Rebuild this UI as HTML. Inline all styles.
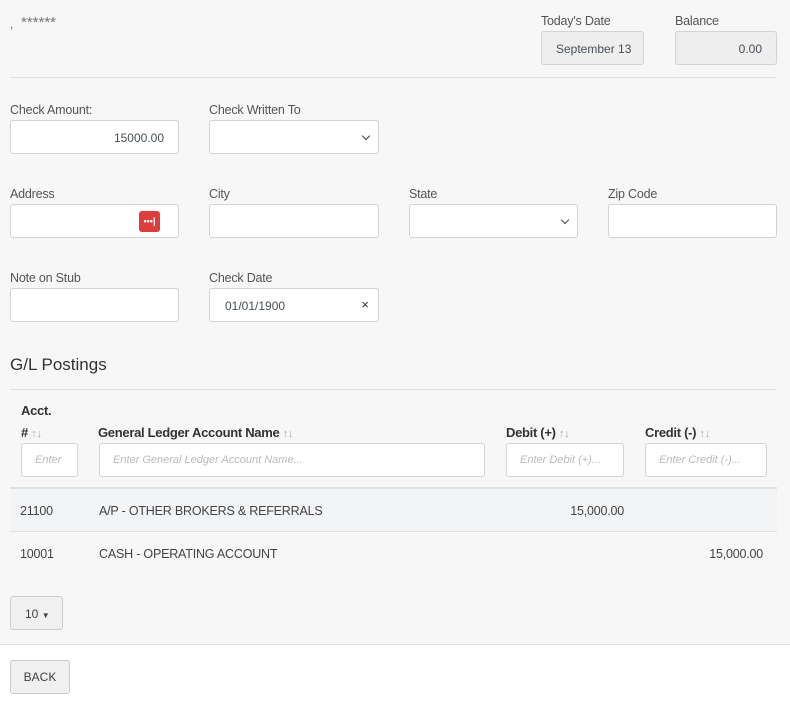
<!DOCTYPE html>
<html><head><style>
*{box-sizing:border-box;margin:0;padding:0}
body{width:790px;height:702px;background:#f7f7f7;font-family:"Liberation Sans",sans-serif;color:#495057;position:relative;overflow:hidden;font-size:12px}
.a{position:absolute}
.lbl{position:absolute;font-size:12.5px;color:#555;letter-spacing:-0.2px}
.in{position:absolute;background:#fff;border:1px solid #ced4da;border-radius:3px;height:34px}
.ro{background:#eeeeee}
.hr{position:absolute;height:1px;background:#dee2e6}
.chev{position:absolute;right:9px;top:12px;width:6px;height:6px;border-right:1.5px solid #444;border-bottom:1.5px solid #444;transform:rotate(45deg)}
.th{position:absolute;font-size:13px;font-weight:bold;color:#333;letter-spacing:-0.3px}
.s{color:#aaa;font-weight:normal;font-size:11px}
.ph{position:absolute;font-size:11px;font-style:italic;color:#bbb;top:10px;left:13px;white-space:nowrap}
.td{position:absolute;font-size:12.5px;color:#444;letter-spacing:-0.2px}
</style></head><body>
<div class="a" style="left:10px;top:17px;font-size:12px;color:#666">,</div>
<div class="a" style="left:21px;top:14px;font-size:15px;color:#777;letter-spacing:0px">******</div>
<div class="lbl" style="left:541px;top:14px">Today's Date</div>
<div class="lbl" style="left:675px;top:14px">Balance</div>
<div class="in ro" style="left:541px;top:31px;width:103px"><span class="a" style="left:14px;top:10px;font-size:12px">September 13</span></div>
<div class="in ro" style="left:675px;top:31px;width:102px"><span class="a" style="right:14px;top:10px;font-size:12px">0.00</span></div>
<div class="hr" style="left:10px;top:77px;width:767px"></div>

<div class="lbl" style="left:10px;top:103px">Check Amount:</div>
<div class="lbl" style="left:209px;top:103px">Check Written To</div>
<div class="in" style="left:10px;top:120px;width:169px"><span class="a" style="right:14px;top:10px;font-size:12px">15000.00</span></div>
<div class="in" style="left:209px;top:120px;width:170px"><div class="chev"></div></div>

<div class="lbl" style="left:10px;top:187px">Address</div>
<div class="lbl" style="left:209px;top:187px">City</div>
<div class="lbl" style="left:409px;top:187px">State</div>
<div class="lbl" style="left:608px;top:187px">Zip Code</div>
<div class="in" style="left:10px;top:204px;width:169px"><div class="a" style="left:128px;top:6px;width:21px;height:21px;background:#dc3e3e;border-radius:3px;color:#fff;font-size:9px;line-height:20px;text-align:center;font-weight:bold">•••|</div></div>
<div class="in" style="left:209px;top:204px;width:170px"></div>
<div class="in" style="left:409px;top:204px;width:169px"><div class="chev"></div></div>
<div class="in" style="left:608px;top:204px;width:169px"></div>

<div class="lbl" style="left:10px;top:271px">Note on Stub</div>
<div class="lbl" style="left:209px;top:271px">Check Date</div>
<div class="in" style="left:10px;top:288px;width:169px"></div>
<div class="in" style="left:209px;top:288px;width:170px"><span class="a" style="left:15px;top:10px;font-size:12px">01/01/1900</span><span class="a" style="right:9px;top:8px;font-size:13px;color:#333">×</span></div>

<div class="a" style="left:10px;top:355px;font-size:17px;color:#333">G/L Postings</div>
<div class="hr" style="left:10px;top:389px;width:767px"></div>

<div class="th" style="left:21px;top:403px">Acct.</div>
<div class="th" style="left:21px;top:425px"># <span class="s">↑↓</span></div>
<div class="th" style="left:98px;top:425px">General Ledger Account Name <span class="s">↑↓</span></div>
<div class="th" style="left:506px;top:425px">Debit (+) <span class="s">↑↓</span></div>
<div class="th" style="left:645px;top:425px">Credit (-) <span class="s">↑↓</span></div>
<div class="in" style="left:21px;top:443px;width:57px"><span class="ph">Enter</span></div>
<div class="in" style="left:99px;top:443px;width:386px"><span class="ph">Enter General Ledger Account Name...</span></div>
<div class="in" style="left:506px;top:443px;width:118px"><span class="ph">Enter Debit (+)...</span></div>
<div class="in" style="left:645px;top:443px;width:122px"><span class="ph">Enter Credit (-)...</span></div>

<div class="a" style="left:10px;top:487px;width:767px;height:2px;background:#dee2e6"></div>
<div class="a" style="left:10px;top:489px;width:767px;height:42px;background:#f3f4f6"></div>
<div class="hr" style="left:10px;top:531px;width:767px"></div>
<div class="td" style="left:20px;top:504px">21100</div>
<div class="td" style="left:99px;top:504px">A/P - OTHER BROKERS &amp; REFERRALS</div>
<div class="td" style="left:560px;top:504px;width:64px;text-align:right">15,000.00</div>
<div class="td" style="left:20px;top:547px">10001</div>
<div class="td" style="left:99px;top:547px">CASH - OPERATING ACCOUNT</div>
<div class="td" style="left:690px;top:547px;width:73px;text-align:right">15,000.00</div>

<div class="a" style="left:10px;top:596px;width:53px;height:34px;border:1px solid #ccc;border-radius:3px;background:#f0f0f0;font-size:12px;color:#444;padding:10px 0 0 14px">10 <span style="font-size:8px">▼</span></div>

<div class="a" style="left:0;top:644px;width:790px;height:58px;background:#fff;border-top:1px solid #dee2e6"></div>
<div class="a" style="left:10px;top:660px;width:60px;height:34px;border:1px solid #ccc;border-radius:3px;background:#f0f0f0;font-size:12px;color:#444;text-align:center;line-height:32px">BACK</div>
</body></html>
